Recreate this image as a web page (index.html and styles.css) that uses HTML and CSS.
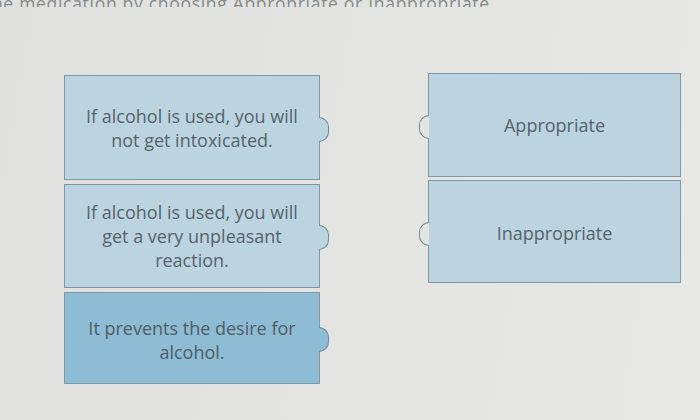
FILE: index.html
```html
<!DOCTYPE html>
<html lang="en">
<head>
    <meta charset="UTF-8">
    <title>Matching</title>
    <link rel="stylesheet" href="styles.css">
</head>
<body>
    <div class="prompt">
        <p>the medication by choosing Appropriate or Inappropriate.</p>
    </div>

    <div class="match-area">
        <div class="column statements">
            <div class="tile tile-out">If alcohol is used, you will<br>not get intoxicated.</div>
            <div class="tile tile-out">If alcohol is used, you will<br>get a very unpleasant<br>reaction.</div>
            <div class="tile tile-out selected">It prevents the desire for<br>alcohol.</div>
        </div>
        <div class="column targets">
            <div class="tile tile-in">Appropriate</div>
            <div class="tile tile-in">Inappropriate</div>
        </div>
    </div>
</body>
</html>
```

FILE: styles.css
```css
body {
    margin: 0;
    width: 700px;
    height: 420px;
    overflow: hidden;
    font-family: "Open Sans", "Noto Sans", sans-serif;
    background: linear-gradient(100deg, #e0e1df 0%, #e4e5e3 55%, #e8e9e7 100%);
}
.prompt {
    height: 7px;
    overflow: hidden;
    display: flex;
    align-items: flex-end;
}
.prompt p {
    margin: 0;
    white-space: nowrap;
    font-size: 17.5px;
    line-height: 20px;
    color: #86898a;
    letter-spacing: 0.7px;
    text-indent: -15px;
    transform: translateY(6px);
}
.match-area {
    display: grid;
    grid-template-columns: 256px 253px;
    column-gap: 108px;
    padding: 66px 0 0 64px;
}
.column {
    display: flex;
    flex-direction: column;
}
.statements {
    gap: 4px;
    padding-top: 2px;
}
.targets {
    gap: 3px;
}
.tile {
    position: relative;
    display: flex;
    align-items: center;
    justify-content: center;
    text-align: center;
    box-sizing: border-box;
    height: 105px;
    border: 1px solid #7f98a6;
    background: #bbd4e0;
    color: #56636b;
    font-size: 18px;
    line-height: 24px;
}
.statements .tile:nth-child(2) {
    height: 104px;
}
.statements .tile.selected {
    height: 92px;
    background: #8ebcd5;
    color: #4f5c64;
    padding-top: 4px;
}
.targets .tile {
    height: 104px;
}
.targets .tile:nth-child(2) {
    height: 103px;
    padding-top: 2px;
}
.tile-out::after {
    content: "";
    position: absolute;
    right: -10px;
    top: 50%;
    width: 9px;
    height: 23px;
    margin-top: -11px;
    border: 1px solid #6f8896;
    border-left: none;
    border-radius: 0 12px 12px 0;
    background: inherit;
}
.tile-in::before {
    content: "";
    position: absolute;
    left: -10px;
    top: 50%;
    width: 9px;
    height: 22px;
    margin-top: -10px;
    border: 1px solid #6f8896;
    border-right: none;
    border-radius: 12px 0 0 12px;
    background: #e3e4e2;
}
```
